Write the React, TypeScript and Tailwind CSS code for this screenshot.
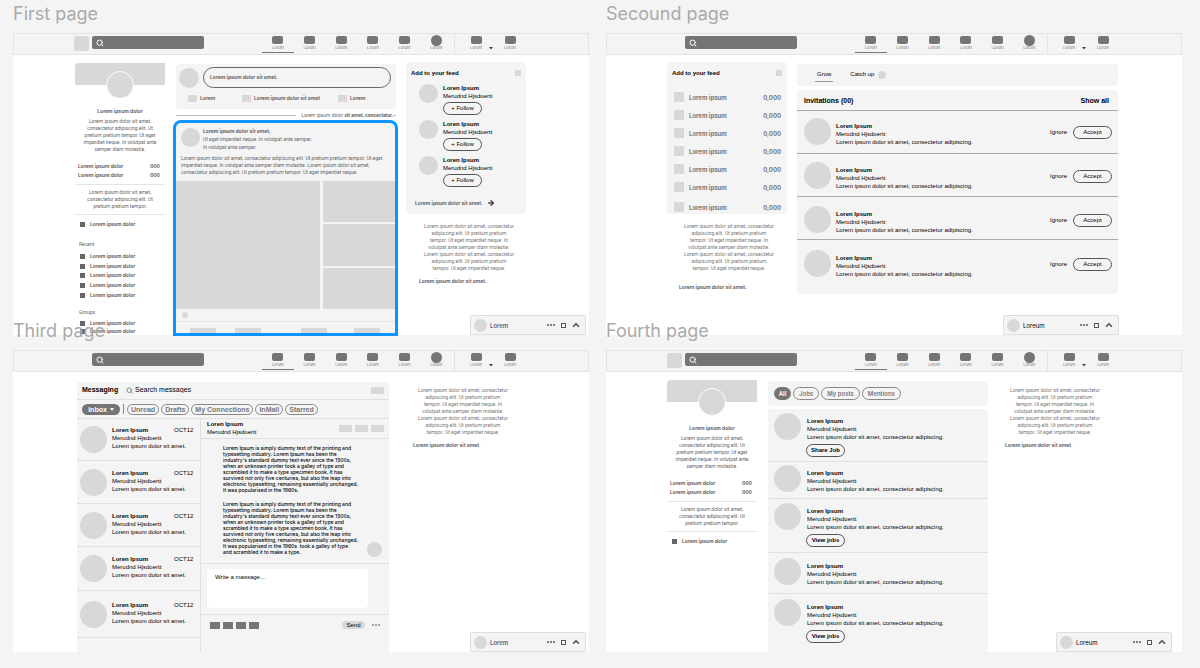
import { ReactNode } from 'react'
import { ArrowRight, ChevronUp, Search } from 'lucide-react'

const intro = `Lorem ipsum dolor sit amet,
consectetur adipiscing elit. Ut
pretium pretium tempor. Ut eget
imperdiet neque. In volutpat ante
semper diam molestie.`

const shortIntro = `Lorem ipsum dolor sit amet,
consectetur adipiscing elit. Ut
pretium pretium tempor.`

const footNote = `Lorem ipsum dolor sit amet, consectetur
adipiscing elit. Ut pretium pretium
tempor. Ut eget imperdiet neque. In
volutpat ante semper diam molestie.
Lorem ipsum dolor sit amet, consectetur
adipiscing elit. Ut pretium pretium
tempor. Ut eget imperdiet neque.`

const postText = `Lorem ipsum dolor sit amet, consectetur adipiscing elit. Ut pretium pretium tempor. Ut eget
imperdiet neque. In volutpat ante semper diam molestie. Lorem ipsum dolor sit amet,
consectetur adipiscing elit. Ut pretium pretium tempor. Ut eget imperdiet neque.`

const messageStart = `Lorem Ipsum is simply dummy text of the printing and
typesetting industry. Lorem Ipsum has been the
industry's standard dummy text ever since the 1500s,
when an unknown printer took a galley of type and
scrambled it to make a type specimen book. It has
survived not only five centuries, but also the leap into
electronic typesetting, remaining essentially unchanged.
`
const messages = [
  messageStart + 'It was popularised in the 1960s.',
  messageStart + 'It was popularised in the 1960s  took a galley of type\nand scrambled it to make a type.',
]

const invitations = [
  { id: 1, padding: 'pt-[7px]' },
  { id: 2, padding: 'pt-[8px]' },
  { id: 3, padding: 'pt-[9px]' },
  { id: 4, padding: 'pt-[10px]' },
]

const conversations = [
  { id: 1, height: 'h-[42px]' },
  { id: 2, height: 'h-[43px]' },
  { id: 3, height: 'h-[43px]' },
  { id: 4, height: 'h-[44px]' },
  { id: 5, height: 'h-[47px]' },
]

const notifications = [
  { id: 1, action: 'Share Job', height: 'h-[53px] pt-1' },
  { id: 2, action: '', height: 'h-[37px] pt-[3px]' },
  { id: 3, action: 'View jobs', height: 'h-[54px] pt-1' },
  { id: 4, action: '', height: 'h-[41px] pt-[5px]' },
  { id: 5, action: 'View jobs', height: 'h-[58px] pt-[5px]' },
]

function Circle({ className }: { className: string }) {
  return <span className={`block shrink-0 rounded-full bg-[#d8d8d8] ${className}`} />
}

function Block({ className }: { className: string }) {
  return <span className={`block shrink-0 bg-[#d8d8d8] ${className}`} />
}

function NavItem({ round = false, active = false }: { round?: boolean; active?: boolean }) {
  return (
    <a
      href="#"
      className={`flex h-[19px] flex-col items-center border-b pt-px ${active ? 'border-[#757575]' : 'border-transparent'}`}
    >
      <span className="flex h-[10px] items-center">
        <span className={`block bg-[#757575] ${round ? 'size-[11px] rounded-full' : 'h-2 w-[11px] rounded-xs'}`} />
      </span>
      <span className="text-[4px] leading-[6px] text-[#757575]">Lorum</span>
    </a>
  )
}

function Navbar({ logo = false }: { logo?: boolean }) {
  return (
    <header className="flex h-[22px] border border-[#e4e4e4] bg-[#f4f4f4] pl-[60px]">
      <div className="flex w-[188px] shrink-0 gap-[3px] pt-[2px]">
        {logo ? <Block className="size-[15px] rounded-xs" /> : <span className="w-[15px]" />}
        <label className="flex h-[13px] w-[112px] items-center rounded-xs bg-[#757575] pl-1 text-white">
          <Search className="size-2 shrink-0" strokeWidth={3} />
          <input type="search" aria-label="Search" className="w-full min-w-0 bg-transparent px-1 text-[6px] outline-none" />
        </label>
      </div>
      <nav className="flex">
        <div className="grid w-[190px] grid-cols-6">
          <NavItem active />
          <NavItem />
          <NavItem />
          <NavItem />
          <NavItem />
          <NavItem round />
        </div>
        <div className="ml-[2px] flex border-l border-[#e4e4e4] pl-[15px]">
          <NavItem />
          <svg viewBox="0 0 4 3" className="mx-[7px] mt-[13px] h-[3px] w-1 fill-[#444]">
            <path d="M0 0h4L2 2.500z" />
          </svg>
          <span className="ml-1">
            <NavItem />
          </span>
        </div>
      </nav>
    </header>
  )
}

function ChatBar({ name, className }: { name: string; className: string }) {
  return (
    <aside
      className={`absolute bottom-0 flex h-5 w-[116px] items-center rounded-t-xs border border-[#dedede] bg-[#f4f4f4] pl-[3px] pr-[5px] ${className}`}
    >
      <Circle className="size-[13px]" />
      <span className="ml-[3px] flex-1 text-[6px]">{name}</span>
      <div className="flex items-center gap-[6px] text-[#555]">
        <svg viewBox="0 0 8 2" className="h-[2px] w-2 fill-current">
          <circle cx="1" cy="1" r="1" />
          <circle cx="4" cy="1" r="1" />
          <circle cx="7" cy="1" r="1" />
        </svg>
        <span className="block size-[5px] border border-current" />
        <ChevronUp className="h-2 w-2 scale-125" strokeWidth={4} />
      </div>
    </aside>
  )
}

function Frame({ title, logo, className = '', children }: { title: string; logo?: boolean; className?: string; children: ReactNode }) {
  return (
    <section className={className}>
      <h2 className="relative z-20 h-[33px] text-[18px] leading-[27px] text-[#aaa]">{title}</h2>
      <div className="relative h-[302px] bg-white">
        <Navbar logo={logo} />
        {children}
      </div>
    </section>
  )
}

function ShortcutRow() {
  return (
    <li className="flex items-center gap-[5px] pl-[5px] font-bold">
      <span className="block size-[5px] bg-[#666]" />
      <a href="#">Lorem ipsum dolor</a>
    </li>
  )
}

function Profile({ children }: { children?: ReactNode }) {
  return (
    <div className="w-[90px] shrink-0 pt-2 text-[5px] leading-[7px] text-[#666]">
      <div className="h-[22px] rounded-tl-sm bg-[#d8d8d8]" />
      <Circle className="relative mx-auto -mt-[14px] size-7 border border-white" />
      <h3 className="mt-[9px] text-center font-bold">Lorem ipsum dolor</h3>
      <p className="mt-[3px] whitespace-pre text-center font-['Roboto',sans-serif]">{intro}</p>
      <dl className="mt-[9px] pr-[5px] pl-[3px] font-bold leading-[9px]">
        <div className="flex justify-between">
          <dt>Lorem ipsum dolor</dt>
          <dd>000</dd>
        </div>
        <div className="flex justify-between">
          <dt>Lorem ipsum dolor</dt>
          <dd>000</dd>
        </div>
      </dl>
      <p className="mt-1 whitespace-pre border-y border-[#e4e4e4] py-1 text-center font-['Roboto',sans-serif]">{shortIntro}</p>
      <ul className="mt-1 leading-[10px]">
        <ShortcutRow />
      </ul>
      {children}
    </div>
  )
}

function FootNote({ className, linkClass = 'mt-[6px]' }: { className: string; linkClass?: string }) {
  return (
    <div className={`w-fit text-[5px] leading-[7px] text-[#777] ${className}`}>
      <p className="whitespace-pre pl-[5px] text-center font-['Roboto',sans-serif]">{footNote}</p>
      <a href="#" className={`block font-bold text-[#666] ${linkClass}`}>
        Lorem ipsum dolor sit amet.
      </a>
    </div>
  )
}

function Person({ text }: { text?: string }) {
  return (
    <div className="whitespace-nowrap font-['Liberation_Sans',sans-serif] text-[6px] leading-[8px] text-black">
      <h4 className="font-bold">Loren Ipsum</h4>
      <p>Merudnd Hjsdoertt</p>
      {text && <p>{text}</p>}
    </div>
  )
}

function OutlineButton({ children, bold = false }: { children: ReactNode; bold?: boolean }) {
  return (
    <button
      type="button"
      className={`block h-[13px] w-[39px] rounded-full border border-[#555] text-center font-['Liberation_Sans',sans-serif] text-[6px] leading-[11px] text-black ${bold ? 'font-bold' : ''}`}
    >
      {children}
    </button>
  )
}

function FeedHeader() {
  return (
    <div className="flex items-center justify-between px-[5px] pt-[7px]">
      <h3 className="font-['Liberation_Sans',sans-serif] text-[6px] leading-[8px] font-bold text-black">Add to your feed</h3>
      <Block className="size-[6px]" />
    </div>
  )
}

function FirstPage() {
  return (
    <Frame title="First page" logo>
      <div className="flex pl-[62px]">
        <Profile>
          <h4 className="mt-3 pl-1 font-['Roboto',sans-serif]">Recent</h4>
          <ul className="mt-1 grid h-12 grid-rows-5">
            {[1, 2, 3, 4, 5].map((item) => (
              <ShortcutRow key={item} />
            ))}
          </ul>
          <h4 className="mt-[9px] pl-1 font-['Roboto',sans-serif]">Groups</h4>
          <ul className="mt-[3px] leading-[8px]">
            <ShortcutRow />
            <ShortcutRow />
          </ul>
        </Profile>

        <main className="ml-[11px] w-[220px] shrink-0 pt-[9px] text-[5px] leading-[7px] text-[#666]">
          <div className="h-[45px] rounded-sm bg-[#f4f4f4] px-[3px] pt-[3px] font-bold">
            <div className="flex items-center gap-1">
              <Circle className="size-5" />
              <button type="button" className="mr-[2px] h-[21px] flex-1 rounded-full border border-[#666] pl-[6px] text-left">
                Lorem ipsum dolor sit amet.
              </button>
            </div>
            <div className="mt-[7px] flex pl-[9px]">
              <a href="#" className="flex w-[54px] items-center gap-[3px]">
                <Block className="h-[7px] w-[9px]" />
                Lorem
              </a>
              <a href="#" className="flex w-24 items-center gap-[3px]">
                <Block className="h-[7px] w-[9px]" />
                Lorem ipsum dolor sit amet
              </a>
              <a href="#" className="flex items-center gap-[3px]">
                <Block className="h-[7px] w-[9px]" />
                Lorem
              </a>
            </div>
          </div>

          <div className="mt-[3px] flex items-center">
            <span className="h-px flex-1 bg-[#bbb]" />
            <span className="ml-[5px] whitespace-nowrap font-['Roboto',sans-serif]">
              Lorem ipsum dolor <b>sit amet, consectetur.</b>
            </span>
            <span className="h-px w-[3px] bg-[#bbb]" />
          </div>

          <article className="relative z-10 -mr-[2px] -ml-[3px] mt-px h-[216px] overflow-hidden rounded-t-lg border-[3px] border-[#0a94ff] bg-[#f4f4f4]">
            <div className="flex gap-1 pt-1 pl-[5px]">
              <Circle className="mt-px size-[19px]" />
              <div className="-ml-px leading-[8px]">
                <h4 className="font-bold">Lorem ipsum dolor sit amet,</h4>
                <p className="font-['Roboto',sans-serif]">Ut eget imperdiet neque. In volutpat ante semper.</p>
                <p className="font-['Roboto',sans-serif]">In volutpat ante semper.</p>
              </div>
            </div>
            <p className="mt-1 whitespace-pre pl-[5px] font-['Roboto',sans-serif]">{postText}</p>
            <div className="mt-[5px] flex h-32 gap-[3px]">
              <Block className="w-36" />
              <div className="flex flex-1 flex-col gap-[2px]">
                <span className="flex-1 bg-[#d8d8d8]" />
                <span className="flex-1 bg-[#d8d8d8]" />
                <span className="flex-1 bg-[#d8d8d8]" />
              </div>
            </div>
            <div className="flex h-[13px] items-center border-b border-[#e4e4e4] pl-[6px]">
              <Circle className="size-[6px]" />
            </div>
            <div className="mt-[6px] flex pl-[14px]">
              <Block className="h-2 w-[26px]" />
              <Block className="ml-[19px] h-2 w-[26px]" />
              <Block className="ml-10 h-2 w-[26px]" />
              <Block className="ml-[27px] h-2 w-[26px]" />
            </div>
          </article>
        </main>

        <aside className="ml-[10px] w-[120px] shrink-0 pt-[7px]">
          <div className="h-[152px] rounded-sm bg-[#f4f4f4]">
            <FeedHeader />
            <ul className="mt-[7px] flex h-[108px] flex-col">
              {[1, 2, 3].map((item) => (
                <li key={item} className="flex h-9 gap-[5px] pl-[13px]">
                  <Circle className="size-[19px]" />
                  <div>
                    <Person />
                    <div className="mt-[2px]">
                      <OutlineButton>+ Follow</OutlineButton>
                    </div>
                  </div>
                </li>
              ))}
            </ul>
            <a href="#" className="mt-[7px] flex items-center gap-1 pl-[9px] text-[5px] leading-[8px] font-bold text-[#666]">
              Lorem ipsum dolor sit amet.
              <ArrowRight className="size-2 text-[#444]" strokeWidth={4} />
            </a>
          </div>
          <FootNote className="mt-[9px] ml-[13px]" />
        </aside>
      </div>
      <ChatBar name="Lorem" className="right-[3px] font-semibold text-[#666]" />
    </Frame>
  )
}

function SecondPage() {
  return (
    <Frame title="Secound page">
      <div className="flex pl-[61px]">
        <aside className="w-[120px] shrink-0 pt-[7px]">
          <div className="h-[152px] rounded-sm bg-[#f4f4f4]">
            <FeedHeader />
            <ul className="mt-[11px] text-[6px] font-bold text-[#777]">
              {[1, 2, 3, 4, 5, 6, 7].map((item) => (
                <li key={item} className="flex h-[18px] items-center pr-[6px] pl-[7px] last:h-[22px]">
                  <Block className="size-[10px]" />
                  <span className="ml-[5px] flex-1">Lorem ipsum</span>
                  <span>0,000</span>
                </li>
              ))}
            </ul>
          </div>
          <FootNote className="mt-[9px] ml-3" linkClass="mt-3" />
        </aside>

        <main className="ml-[10px] w-[321px] shrink-0 pt-[9px] text-black">
          <div className="flex h-[22px] rounded-xs bg-[#f4f4f4] pt-[6px] pl-[18px] font-['Liberation_Sans',sans-serif] text-[6px] leading-[9px]">
            <a href="#" className="h-3 border-b border-[#999] px-[2px]">
              Grow
            </a>
            <a href="#" className="ml-[17px] flex h-[9px] items-center gap-1">
              Catch up
              <Circle className="size-2" />
            </a>
          </div>
          <div className="mt-1 h-[204px] rounded-sm bg-[#f4f4f4]">
            <div className="flex h-[21px] items-center justify-between border-b border-[#aaa] pt-[3px] pr-[9px] pl-[7px] font-['Liberation_Sans',sans-serif] text-[7px] font-bold">
              <h3>Invitations (00)</h3>
              <a href="#">Show all</a>
            </div>
            <ul>
              {invitations.map((item) => (
                <li key={item.id} className={`flex h-[43px] border-b border-[#aaa] pr-[6px] pl-[7px] last:border-0 ${item.padding}`}>
                  <Circle className="size-[27px]" />
                  <div className="ml-[5px] flex-1 pt-1">
                    <Person text="Lorem ipsum dolor sit amet, consectetur adipiscing." />
                  </div>
                  <div className="flex h-7 items-center gap-[6px]">
                    <button type="button" className="font-['Liberation_Sans',sans-serif] text-[6px]">
                      Ignore
                    </button>
                    <OutlineButton>Accept</OutlineButton>
                  </div>
                </li>
              ))}
            </ul>
          </div>
        </main>
      </div>
      <ChatBar name="Loreum" className="right-[63px] text-black" />
    </Frame>
  )
}

function ThirdPage() {
  const filters = ['Unread', 'Drafts', 'My Connections', 'InMail', 'Starred']
  return (
    <Frame title="Third page" className="-mt-[18px]">
      <div className="flex pl-16">
        <main className="mt-[10px] flex h-[270px] w-[312px] shrink-0 flex-col bg-[#f4f4f4]">
          <div className="flex h-[18px] items-center border-b border-[#e0e0e0] px-[5px] font-['Liberation_Sans',sans-serif] text-[7px] text-black">
            <h3 className="w-11 font-bold">Messaging</h3>
            <label className="flex flex-1 items-center gap-[2px]">
              <Search className="size-[7px] text-[#444]" />
              <input type="search" aria-label="Search messages" placeholder="Search messages" className="w-20 outline-none placeholder:text-black" />
            </label>
            <Block className="h-[7px] w-[13px]" />
          </div>
          <div className="flex h-[19px] items-center gap-[2px] border-b border-[#e0e0e0] pl-[5px] font-['Liberation_Sans',sans-serif] text-[7px] leading-[9px] font-bold text-[#777]">
            <button type="button" className="flex h-[11px] w-[38px] items-center justify-center gap-[3px] rounded-full bg-[#757575] text-white">
              Inbox
              <svg viewBox="0 0 4 3" className="h-[3px] w-1 fill-current">
                <path d="M0 0h4L2 3z" />
              </svg>
            </button>
            <span className="mx-px h-[10px] w-px bg-[#888]" />
            {filters.map((filter) => (
              <button key={filter} type="button" className="h-[11px] rounded-full border border-[#888] px-[3px] whitespace-nowrap">
                {filter}
              </button>
            ))}
          </div>

          <div className="flex flex-1">
            <ul className="w-[124px] shrink-0 border-r border-[#e0e0e0]">
              {conversations.map((item) => (
                <li key={item.id} className={`flex items-center border-b border-[#e0e0e0] pr-[7px] pl-[3px] ${item.height}`}>
                  <Circle className="size-[27px]" />
                  <div className="ml-[5px] w-[62px] pb-[3px]">
                    <Person text="Lorem ipsum dolor sit amet." />
                  </div>
                  <time className="h-[27px] flex-1 text-right font-['Liberation_Sans',sans-serif] text-[6px] leading-[8px] text-black">OCT12</time>
                </li>
              ))}
            </ul>

            <div className="flex min-w-0 flex-1 flex-col">
              <div className="flex h-5 items-center gap-[3px] border-b border-[#e0e0e0] pr-[5px] pl-[6px]">
                <div className="flex-1 pb-px">
                  <Person />
                </div>
                <Block className="h-[7px] w-[13px]" />
                <Block className="h-[7px] w-[13px]" />
                <Block className="h-[7px] w-[13px]" />
              </div>
              <div className="flex h-[125px] justify-between border-b border-[#e0e0e0] pt-[6px] pr-[7px] pb-[6px] pl-[22px] text-black">
                <div className="flex w-[141px] flex-col gap-2 whitespace-pre text-[5px] leading-[6px] font-medium">
                  {messages.map((message) => (
                    <p key={message}>{message}</p>
                  ))}
                </div>
                <Circle className="size-[15px] self-end" />
              </div>
              <div className="h-[51px] border-b border-[#e0e0e0] pt-[5px] pl-[6px]">
                <textarea
                  aria-label="Message"
                  placeholder="Write a massage..."
                  className="block h-[39px] w-[161px] resize-none rounded-sm bg-white px-2 py-1 font-['Liberation_Sans',sans-serif] text-[6px] leading-[8px] outline-none placeholder:text-black"
                />
              </div>
              <div className="flex items-center gap-[3px] pt-[6px] pr-[9px] pl-[9px]">
                {[1, 2, 3, 4].map((item) => (
                  <span key={item} className="block h-[7px] w-[10px] bg-[#757575]" />
                ))}
                <button type="button" className="ml-auto h-2 w-[23px] rounded-full bg-[#d8d8d8] font-['Liberation_Sans',sans-serif] text-[6px] leading-[8px] text-black">
                  Send
                </button>
                <svg viewBox="0 0 8 2" className="ml-1 h-[2px] w-2 fill-[#444]">
                  <circle cx="1" cy="1" r=".8" />
                  <circle cx="4" cy="1" r=".8" />
                  <circle cx="7" cy="1" r=".8" />
                </svg>
              </div>
            </div>
          </div>
        </main>
        <FootNote className="mt-[15px] ml-6" />
      </div>
      <ChatBar name="Lorem" className="right-[3px] font-semibold text-[#666]" />
    </Frame>
  )
}

function FourthPage() {
  const tabs = ['Jobs', 'My posts', 'Mentions']
  return (
    <Frame title="Fourth page" logo className="-mt-[18px]">
      <div className="flex pl-[61px]">
        <Profile />
        <main className="ml-[11px] w-[220px] shrink-0 pt-[9px]">
          <div className="flex h-[25px] items-center gap-[2px] rounded-sm bg-[#f4f4f4] pl-[6px] text-[6px] leading-[11px] font-semibold text-[#777]">
            <button type="button" className="h-[13px] w-[17px] rounded-full bg-[#757575] text-white">
              All
            </button>
            {tabs.map((tab) => (
              <button key={tab} type="button" className="h-[13px] rounded-full border border-[#888] px-[5px]">
                {tab}
              </button>
            ))}
          </div>
          <ul className="mt-[3px] rounded-sm bg-[#f4f4f4]">
            {notifications.map((item) => (
              <li key={item.id} className={`flex border-b border-[#e0e0e0] pl-[6px] last:border-0 ${item.height}`}>
                <Circle className="size-[27px]" />
                <div className="ml-[5px] pt-1">
                  <div className="pl-px">
                    <Person text="Lorem ipsum dolor sit amet, consectetur adipiscing." />
                  </div>
                  {item.action && (
                    <div className="mt-[3px]">
                      <OutlineButton bold>{item.action}</OutlineButton>
                    </div>
                  )}
                </div>
              </li>
            ))}
          </ul>
        </main>
        <FootNote className="mt-[15px] ml-[17px]" />
      </div>
      <ChatBar name="Loreum" className="right-[10px] text-black" />
    </Frame>
  )
}

export default function App() {
  return (
    <div className="min-h-screen bg-[#f4f4f4] pr-[18px] pl-[13px] font-[Inter,sans-serif]">
      <div className="grid grid-cols-2 gap-x-[17px]">
        <FirstPage />
        <SecondPage />
        <ThirdPage />
        <FourthPage />
      </div>
    </div>
  )
}
